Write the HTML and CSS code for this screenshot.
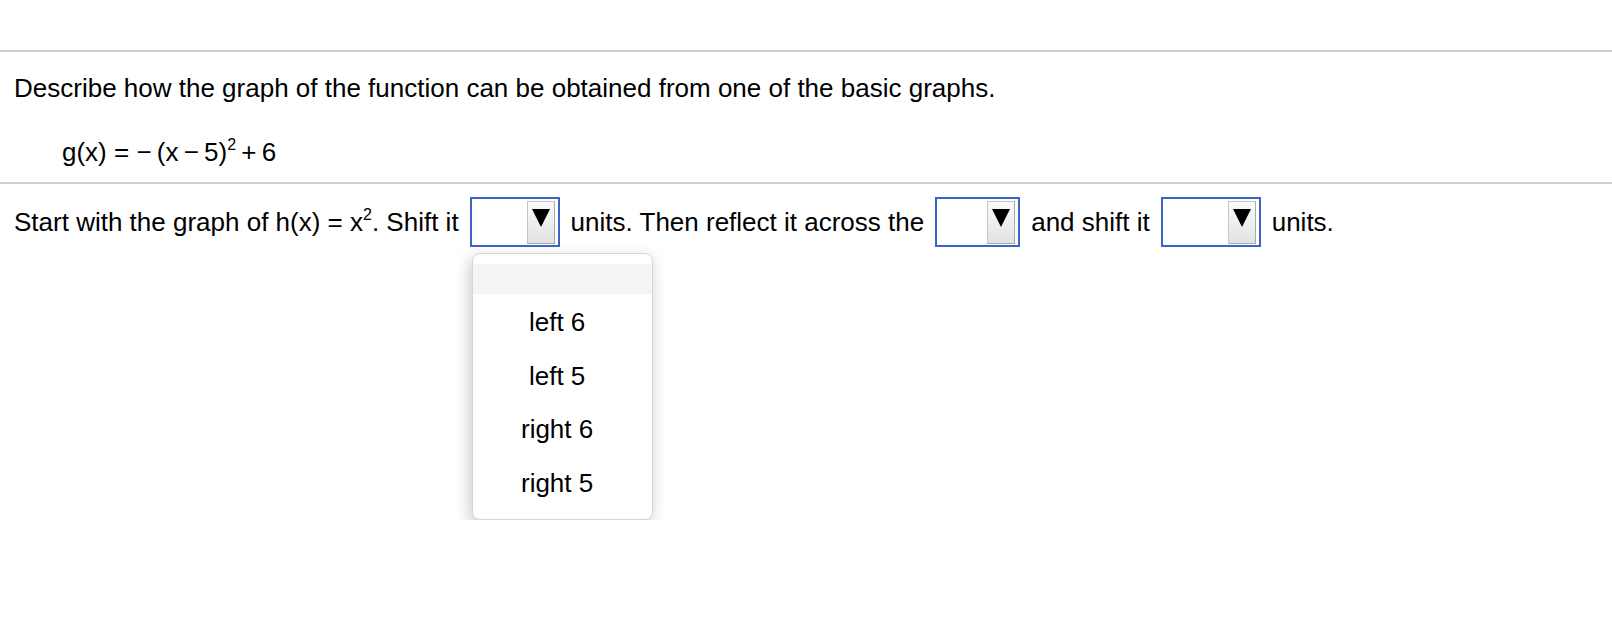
FILE: index.html
```html
<!DOCTYPE html>
<html lang="en">
<head>
    <meta charset="UTF-8">
    <meta name="viewport" content="width=device-width, initial-scale=1.0">
    <title>Transformations of graphs</title>
    <link rel="stylesheet" href="styles.css">
</head>
<body>
    <div class="page">
        <hr class="rule">

        <p class="prompt">Describe how the graph of the function can be obtained from one of the basic graphs.</p>
        <p class="equation">g(x) = &minus;&thinsp;(x&thinsp;&minus;&thinsp;5)<sup>2</sup>&thinsp;+&thinsp;6</p>

        <hr class="rule">

        <div class="answer">
            <span>Start with the graph of h(x) = x<sup>2</sup>. Shift it</span>
            <div class="picker-wrap">
                <div class="picker picker-shift">
                    <span class="picker-btn"><span class="tri"></span></span>
                </div>
                <div class="choice-list">
                    <div class="choice-blank"></div>
                    <div class="choice">left 6</div>
                    <div class="choice">left 5</div>
                    <div class="choice">right 6</div>
                    <div class="choice">right 5</div>
                </div>
            </div>
            <span>units. Then reflect it across the</span>
            <div class="picker picker-axis">
                <span class="picker-btn"><span class="tri"></span></span>
            </div>
            <span>and shift it</span>
            <div class="picker picker-units">
                <span class="picker-btn"><span class="tri"></span></span>
            </div>
            <span>units.</span>
        </div>
    </div>
</body>
</html>
```

FILE: styles.css
```css
* {
    margin: 0;
    padding: 0;
    box-sizing: border-box;
}

body {
    background-color: #ffffff;
    color: #000000;
    font-family: 'Liberation Sans', Arial, sans-serif;
    font-size: 26px;
    line-height: 30px;
}

.page {
    padding-top: 50px;
}

.rule {
    border: none;
    height: 2px;
    background-color: #cdd0dc;
}

.prompt {
    margin: 21px 0 0 14px;
}

.equation {
    margin: 34px 0 15px 62px;
}

sup {
    font-size: 16px;
    line-height: 0;
    vertical-align: 11px;
}

.answer {
    display: flex;
    align-items: flex-start;
    gap: 11px;
    margin: 13px 0 0 14px;
}

.answer > span {
    line-height: 50px;
}

/* the open list hangs below the first picker, wider than it */
.picker-wrap {
    display: flex;
    flex-direction: column;
    width: 90px;
    flex-shrink: 0;
}

.picker {
    display: flex;
    justify-content: flex-end;
    align-items: center;
    height: 50px;
    padding-right: 3px;
    border: 2px solid #3c64c8;
    background-color: #ffffff;
    flex-shrink: 0;
}

.picker-shift { width: 90px; }
.picker-axis { width: 85px; }
.picker-units { width: 100px; }

.picker-btn {
    display: flex;
    justify-content: center;
    padding-top: 7px;
    width: 28px;
    height: 43px;
    border: 1px solid #c4c4c4;
    border-right-color: #a9a9a9;
    border-bottom-color: #a9a9a9;
    background: linear-gradient(#fbfbfb, #e2e2e2);
}

.tri {
    width: 0;
    height: 0;
    border-left: 9px solid transparent;
    border-right: 9px solid transparent;
    border-top: 18px solid #000000;
}

.choice-list {
    width: 181px;
    flex-shrink: 0;
    margin: 6px 0 0 2px;
    padding: 10px 0 9px;
    background-color: #ffffff;
    border: 1px solid #d6d6d6;
    border-radius: 8px;
    box-shadow: -2px 5px 16px rgba(0, 0, 0, 0.22);
}

.choice {
    height: 53.5px;
    line-height: 53.5px;
    text-align: center;
    padding-right: 10px;
}

.choice-blank {
    height: 30px;
    margin-bottom: 2px;
    background-color: #f4f4f4;
}
```
